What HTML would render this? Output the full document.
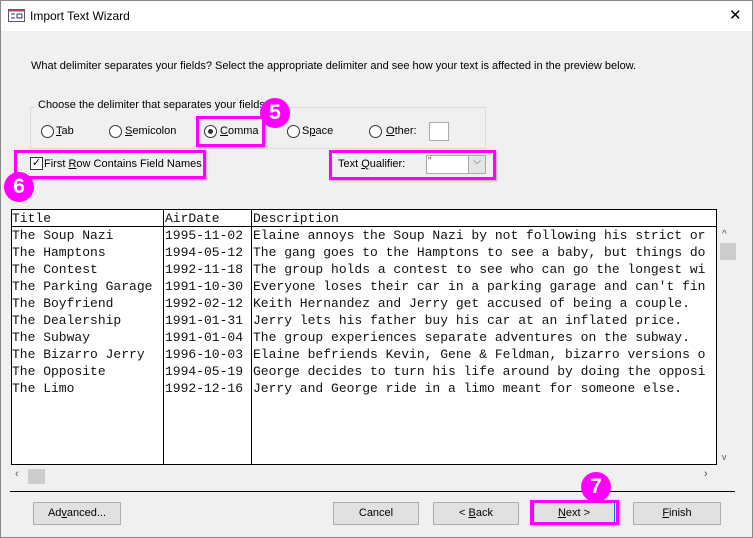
<!DOCTYPE html><html><head><style>
*{margin:0;padding:0;box-sizing:border-box}
body{width:753px;height:538px;background:#f0f0f0;font-family:"Liberation Sans",sans-serif;font-size:12px;color:#000;position:relative;overflow:hidden}
.a{position:absolute;white-space:nowrap}
.mono{font-family:"Liberation Mono",monospace;font-size:13px;line-height:17px;color:#111}
.mag{position:absolute;border:3px solid #ff00ff;box-shadow:1px 1px 2px rgba(0,0,0,.3)}
.circ{position:absolute;width:30px;height:30px;border-radius:50%;background:#ff00ff;color:#fff;font-weight:bold;font-size:21px;text-align:center;line-height:30px}
.rad{position:absolute;width:13px;height:13px;border:1px solid #333;border-radius:50%;background:#fff}
.btn{position:absolute;height:23px;background:#e1e1e1;border:1px solid #adadad;text-align:center;line-height:21px}
</style></head><body>
<div class="a" style="left:0;top:0;width:753px;height:31px;background:#fff;border:1px solid #888;border-bottom:none"></div>
<div class="a" style="left:0;top:0;width:1px;height:538px;background:#888"></div>
<div class="a" style="left:752px;top:0;width:1px;height:538px;background:#888"></div>
<div class="a" style="left:0;top:537px;width:753px;height:1px;background:#888"></div>
<svg class="a" style="left:8px;top:9px" width="17" height="13"><rect x=".5" y=".5" width="16" height="12" fill="#fff" stroke="#556"/><rect x=".5" y=".5" width="16" height="2" fill="#b04060"/><path d="M3 5h4M3 9h4M9 5h5M9 9h5M9 5v4M14 5v4" stroke="#335"/></svg>
<div class="a" style="left:30px;top:9px;font-size:12px">Import Text Wizard</div>
<div class="a" style="left:729px;top:6px;font-size:15px">✕</div>
<div class="a" style="left:31px;top:60px;font-size:11px">What delimiter separates your fields? Select the appropriate delimiter and see how your text is affected in the preview below.</div>
<div class="a" style="left:30px;top:107px;width:456px;height:42px;border:1px solid #dcdcdc"></div>
<div class="a" style="left:35px;top:99px;background:#f0f0f0;padding:0 3px;font-size:11px">Choose the delimiter that separates your fields:</div>
<div class="rad" style="left:41px;top:125px"></div><div class="a" style="left:56px;top:125px;font-size:11px"><u>T</u>ab</div>
<div class="rad" style="left:109px;top:125px"></div><div class="a" style="left:125px;top:125px;font-size:11px"><u>S</u>emicolon</div>
<div class="rad" style="left:204px;top:125px"><div style="position:absolute;left:3px;top:3px;width:5px;height:5px;border-radius:50%;background:#333"></div></div><div class="a" style="left:220px;top:125px;font-size:11px"><u>C</u>omma</div>
<div class="rad" style="left:287px;top:125px"></div><div class="a" style="left:302px;top:125px;font-size:11px">S<u>p</u>ace</div>
<div class="rad" style="left:369px;top:125px"></div><div class="a" style="left:386px;top:125px;font-size:11px"><u>O</u>ther:</div>
<div class="a" style="left:429px;top:122px;width:20px;height:19px;background:#fff;border:1px solid #aaa"></div>
<div class="mag" style="left:196px;top:116px;width:69px;height:31px"></div>
<div class="a" style="left:30px;top:157px;width:13px;height:13px;border:1px solid #333;background:#fff;font-size:11px;line-height:11px;text-align:center">✓</div>
<div class="a" style="left:44px;top:158px;font-size:11px">First <u>R</u>ow Contains Field Names</div>
<div class="mag" style="left:14px;top:150px;width:192px;height:29px"></div>
<div class="a" style="left:338px;top:158px;font-size:11px">Text <u>Q</u>ualifier:</div>
<div class="a" style="left:426px;top:155px;width:60px;height:19px;background:#fff;border:1px solid #aaa"></div>
<div class="a" style="left:428px;top:156px;font-size:10px;color:#c0392b">"</div>
<div class="a" style="left:468px;top:156px;width:17px;height:17px;background:#e5e5e5;border-left:1px solid #aaa;font-size:10px;text-align:center;color:#555">⌵</div>
<div class="mag" style="left:329px;top:150px;width:167px;height:30px"></div>
<div class="circ" style="left:260px;top:98px">5</div>
<div class="circ" style="left:4px;top:172px">6</div>
<div class="a" style="left:11px;top:209px;width:706px;height:256px;background:#fff;border:1px solid #000"></div>
<div class="a" style="left:11px;top:226px;width:706px;height:1px;background:#000"></div>
<div class="a" style="left:163px;top:209px;width:1px;height:256px;background:#000"></div>
<div class="a" style="left:251px;top:209px;width:1px;height:256px;background:#000"></div>
<div class="a mono" style="left:12px;top:210px;width:150px">Title<br>The Soup Nazi<br>The Hamptons<br>The Contest<br>The Parking Garage<br>The Boyfriend<br>The Dealership<br>The Subway<br>The Bizarro Jerry<br>The Opposite<br>The Limo</div>
<div class="a mono" style="left:165px;top:210px">AirDate<br>1995-11-02<br>1994-05-12<br>1992-11-18<br>1991-10-30<br>1992-02-12<br>1991-01-31<br>1991-01-04<br>1996-10-03<br>1994-05-19<br>1992-12-16</div>
<div class="a mono" style="left:253px;top:210px;width:463px;overflow:hidden">Description<br>Elaine annoys the Soup Nazi by not following his strict or<br>The gang goes to the Hamptons to see a baby, but things do<br>The group holds a contest to see who can go the longest wi<br>Everyone loses their car in a parking garage and can't fin<br>Keith Hernandez and Jerry get accused of being a couple.<br>Jerry lets his father buy his car at an inflated price.<br>The group experiences separate adventures on the subway.<br>Elaine befriends Kevin, Gene &amp; Feldman, bizarro versions o<br>George decides to turn his life around by doing the opposi<br>Jerry and George ride in a limo meant for someone else.</div>
<div class="a" style="left:717px;top:227px;width:19px;height:238px;background:#f0f0f0"></div>
<div class="a" style="left:722px;top:229px;font-size:10px;color:#555">^</div>
<div class="a" style="left:720px;top:243px;width:16px;height:17px;background:#cdcdcd"></div>
<div class="a" style="left:722px;top:452px;font-size:9px;color:#555">v</div>
<div class="a" style="left:11px;top:466px;width:706px;height:18px;background:#f0f0f0"></div>
<div class="a" style="left:28px;top:469px;width:17px;height:15px;background:#cdcdcd"></div>
<div class="a" style="left:15px;top:468px;font-size:11px;color:#555">‹</div>
<div class="a" style="left:704px;top:468px;font-size:11px;color:#555">›</div>
<div class="a" style="left:10px;top:491px;width:725px;height:1px;background:#000"></div>
<div class="btn" style="left:33px;top:502px;width:88px;font-size:11px">Ad<u>v</u>anced...</div>
<div class="btn" style="left:333px;top:502px;width:86px;font-size:11px">Cancel</div>
<div class="btn" style="left:433px;top:502px;width:86px;font-size:11px">&lt; <u>B</u>ack</div>
<div class="btn" style="left:533px;top:502px;width:82px;font-size:11px;border-color:#0078d7"><u>N</u>ext &gt;</div>
<div class="mag" style="left:530px;top:500px;width:89px;height:25px"></div>
<div class="btn" style="left:633px;top:502px;width:88px;font-size:11px"><u>F</u>inish</div>
<div class="circ" style="left:581px;top:472px">7</div>
</body></html>
